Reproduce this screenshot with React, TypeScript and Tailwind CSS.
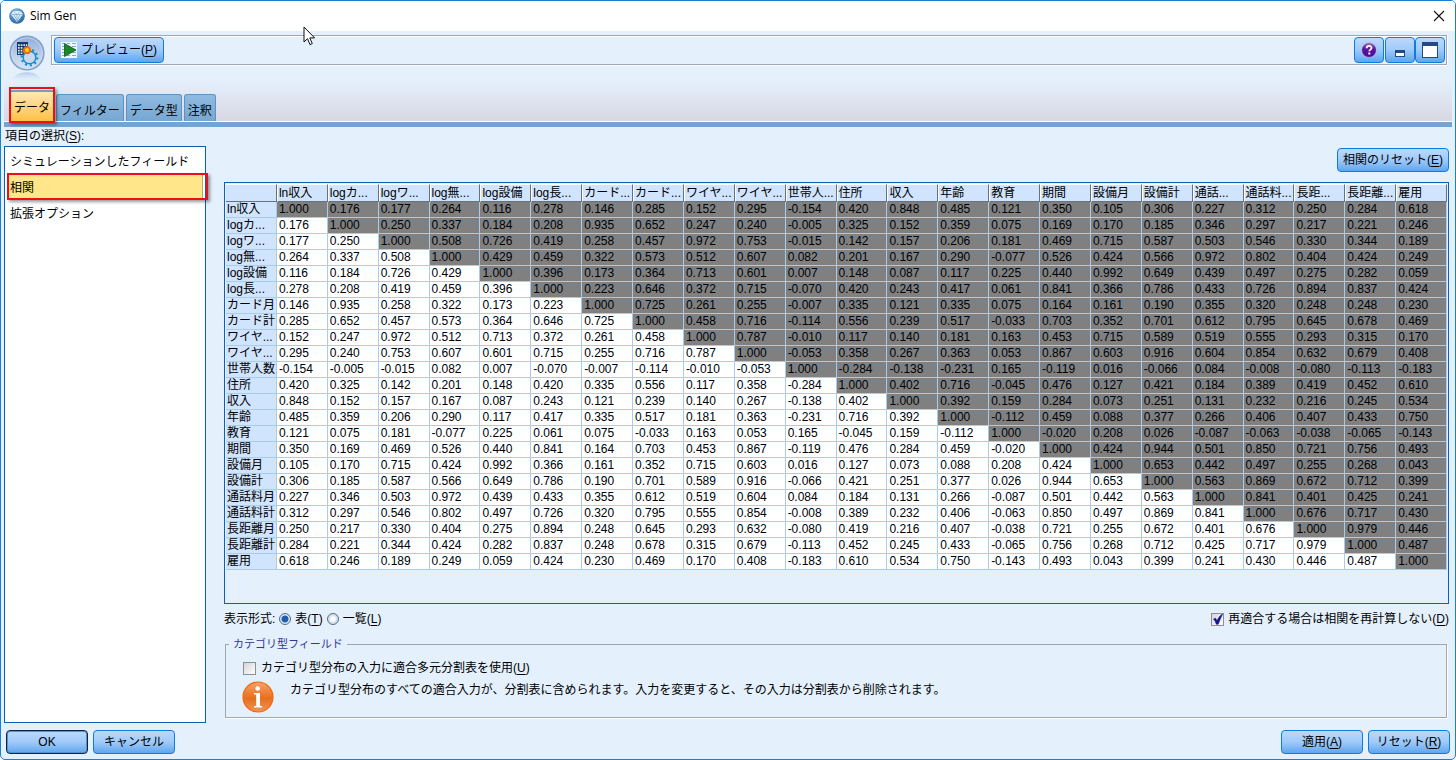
import { useState } from "react";
import type { ReactNode } from "react";

const columnLabels = [
  "ln収入", "logカ...", "logワ...", "log無...", "log設備", "log長...", "カード...", "カード...",
  "ワイヤ...", "ワイヤ...", "世帯人...", "住所", "収入", "年齢", "教育", "期間", "設備月", "設備計",
  "通話...", "通話料...", "長距...", "長距離...", "雇用",
];

const rowLabels = [
  "ln収入", "logカ...", "logワ...", "log無...", "log設備", "log長...", "カード月", "カード計",
  "ワイヤ...", "ワイヤ...", "世帯人数", "住所", "収入", "年齢", "教育", "期間", "設備月", "設備計",
  "通話料月", "通話料計", "長距離月", "長距離計", "雇用",
];

// Lower triangle of the correlation matrix; the upper half mirrors it.
const lower: string[][] = [
  "",
  "0.176",
  "0.177 0.250",
  "0.264 0.337 0.508",
  "0.116 0.184 0.726 0.429",
  "0.278 0.208 0.419 0.459 0.396",
  "0.146 0.935 0.258 0.322 0.173 0.223",
  "0.285 0.652 0.457 0.573 0.364 0.646 0.725",
  "0.152 0.247 0.972 0.512 0.713 0.372 0.261 0.458",
  "0.295 0.240 0.753 0.607 0.601 0.715 0.255 0.716 0.787",
  "-0.154 -0.005 -0.015 0.082 0.007 -0.070 -0.007 -0.114 -0.010 -0.053",
  "0.420 0.325 0.142 0.201 0.148 0.420 0.335 0.556 0.117 0.358 -0.284",
  "0.848 0.152 0.157 0.167 0.087 0.243 0.121 0.239 0.140 0.267 -0.138 0.402",
  "0.485 0.359 0.206 0.290 0.117 0.417 0.335 0.517 0.181 0.363 -0.231 0.716 0.392",
  "0.121 0.075 0.181 -0.077 0.225 0.061 0.075 -0.033 0.163 0.053 0.165 -0.045 0.159 -0.112",
  "0.350 0.169 0.469 0.526 0.440 0.841 0.164 0.703 0.453 0.867 -0.119 0.476 0.284 0.459 -0.020",
  "0.105 0.170 0.715 0.424 0.992 0.366 0.161 0.352 0.715 0.603 0.016 0.127 0.073 0.088 0.208 0.424",
  "0.306 0.185 0.587 0.566 0.649 0.786 0.190 0.701 0.589 0.916 -0.066 0.421 0.251 0.377 0.026 0.944 0.653",
  "0.227 0.346 0.503 0.972 0.439 0.433 0.355 0.612 0.519 0.604 0.084 0.184 0.131 0.266 -0.087 0.501 0.442 0.563",
  "0.312 0.297 0.546 0.802 0.497 0.726 0.320 0.795 0.555 0.854 -0.008 0.389 0.232 0.406 -0.063 0.850 0.497 0.869 0.841",
  "0.250 0.217 0.330 0.404 0.275 0.894 0.248 0.645 0.293 0.632 -0.080 0.419 0.216 0.407 -0.038 0.721 0.255 0.672 0.401 0.676",
  "0.284 0.221 0.344 0.424 0.282 0.837 0.248 0.678 0.315 0.679 -0.113 0.452 0.245 0.433 -0.065 0.756 0.268 0.712 0.425 0.717 0.979",
  "0.618 0.246 0.189 0.249 0.059 0.424 0.230 0.469 0.170 0.408 -0.183 0.610 0.534 0.750 -0.143 0.493 0.043 0.399 0.241 0.430 0.446 0.487",
].map((line) => line.split(" "));

function valueAt(row: number, col: number) {
  if (row === col) return "1.000";
  return row > col ? lower[row][col] : lower[col][row];
}

function Key({ children }: { children: string }) {
  return (
    <span>
      (<span className="underline underline-offset-2">{children}</span>)
    </span>
  );
}

const buttonBase =
  "flex items-center justify-center whitespace-nowrap rounded-[4px] border bg-linear-to-b from-[#bcd9fc] via-[#9fcafa] to-[#5ea6ee]";

function GlossyButton({ className, label, children }: { className: string; label?: string; children: ReactNode }) {
  return (
    <button type="button" aria-label={label} className={`${buttonBase} ${className}`}>
      {children}
    </button>
  );
}

function AppIcon() {
  return (
    <svg className="size-4" viewBox="0 0 16 16" aria-hidden="true">
      <defs>
        <radialGradient id="app" cx="0.4" cy="0.3" r="0.8">
          <stop offset="0" stopColor="#9cc6e8" />
          <stop offset="0.6" stopColor="#3f81ba" />
          <stop offset="1" stopColor="#22639f" />
        </radialGradient>
      </defs>
      <circle cx="8" cy="8" r="7.8" fill="url(#app)" />
      <path d="M4.500 3h7L14 6.300l-6 7.700L2 6.300z" fill="#e3f1fc" />
      <path d="M4.500 3 8 6.500l3.500-3.500M2.500 6.500h11M8 14V6.500M8 13 5 6.500M8 13l3-6.500" fill="none" stroke="#6ba6d3" strokeWidth=".7" />
    </svg>
  );
}

function NodeIcon() {
  return (
    <svg className="h-[47px] w-[36px]" viewBox="0 0 36 47" aria-hidden="true">
      <defs>
        <linearGradient id="disc" x1="0" y1="0" x2="0" y2="1">
          <stop offset="0" stopColor="#8fadd6" />
          <stop offset="0.45" stopColor="#b4c8e5" />
          <stop offset="1" stopColor="#dbe7f7" />
        </linearGradient>
        <linearGradient id="mirror" x1="0" y1="0" x2="0" y2="1">
          <stop offset="0" stopColor="#b3c9e6" />
          <stop offset="1" stopColor="#e4f0fc" stopOpacity="0" />
        </linearGradient>
      </defs>
      <path d="M2 47c4-13 28-13 32 0z" fill="url(#mirror)" />
      <circle cx="18" cy="18" r="16.8" fill="url(#disc)" stroke="#86a1cb" strokeWidth="1.6" />
      <circle cx="18" cy="18" r="15.3" fill="none" stroke="#c9d9ee" strokeWidth=".8" />
      <rect x="8" y="7" width="11" height="13" fill="#123a68" />
      <path d="M9 9.200h1.700v1.700H9zM11.700 9.200h1.700v1.700h-1.700zM14.400 9.200h1.700v1.700h-1.700zM17 9.200h1.300v1.700H17zM9 12h1.700v1.700H9zM11.700 12h1.700v1.700h-1.700zM9 14.800h1.700v1.700H9zM11.700 14.800h1.700v1.700h-1.700zM9 17.500h1.700v1.600H9zM11.700 17.500h1.700v1.600h-1.700z" fill="#dbe8f7" />
      <circle cx="20.500" cy="22.500" r="7.800" fill="none" stroke="#188bc9" strokeWidth="2.200" strokeDasharray="2 2.900" />
      <circle cx="20.500" cy="22.500" r="6.300" fill="#c6d9f0" stroke="#188bc9" strokeWidth="1.400" />
      <circle cx="18" cy="15.300" r="4" fill="#f26b0c" />
      <circle cx="18" cy="15" r="2.100" fill="#ffd21f" />
    </svg>
  );
}

function PreviewIcon() {
  return (
    <svg className="size-4" viewBox="0 0 16 16" aria-hidden="true">
      <rect width="16" height="16" fill="#f1f6fe" />
      <path d="M1 1.500h3M6 1.500h3M11 1.500h4M1 4.500h3M6 4.500h3M11 4.500h4M1 7.500h3M11 7.500h4M1 10.500h3M6 10.500h3M11 10.500h4M1 13.500h3M6 13.500h3M11 13.500h4" stroke="#88a5cf" strokeWidth="1" />
      <path d="M3.500 1.500v13L15 8z" fill="#158a22" stroke="#075a12" strokeWidth=".8" />
    </svg>
  );
}

function HelpIcon() {
  return (
    <svg className="size-4 shrink-0" viewBox="0 0 16 16" aria-hidden="true">
      <defs>
        <linearGradient id="help" x1="0" y1="0" x2="0" y2="1">
          <stop offset="0" stopColor="#9a6fc0" />
          <stop offset="0.45" stopColor="#5a1496" />
          <stop offset="1" stopColor="#4a0a9c" />
        </linearGradient>
      </defs>
      <circle cx="8" cy="8" r="7.400" fill="url(#help)" stroke="#d9cdea" strokeWidth=".6" />
      <path d="M5.700 6.200c0-3.100 4.800-3 4.800-.3 0 1.700-2.200 1.700-2.200 3.400" fill="none" stroke="#fff" strokeWidth="1.800" />
      <rect x="7.300" y="10.500" width="2" height="2" fill="#fff" />
    </svg>
  );
}

function InfoIcon() {
  return (
    <svg className="size-8 shrink-0" viewBox="0 0 32 32" aria-hidden="true">
      <defs>
        <linearGradient id="info" x1="0" y1="0" x2="0" y2="1">
          <stop offset="0" stopColor="#f7a468" />
          <stop offset="0.42" stopColor="#ee7a2c" />
          <stop offset="0.55" stopColor="#e5701f" />
          <stop offset="1" stopColor="#f0965a" />
        </linearGradient>
      </defs>
      <circle cx="16" cy="16" r="15" fill="url(#info)" stroke="#f5640c" strokeWidth="1.200" />
      <circle cx="15.700" cy="7.500" r="2.300" fill="#fff" />
      <path d="M12 12h6v13h2.200v1.500H12V25h2.200V13.500H12z" fill="#fff" />
    </svg>
  );
}

const tabs = ["フィルター", "データ型", "注釈"];
const items = ["シミュレーションしたフィールド", "相関", "拡張オプション"];

export default function App() {
  const [view, setView] = useState("table");
  const [keep, setKeep] = useState(true);
  const [multiway, setMultiway] = useState(false);
  const radio =
    "size-3 appearance-none rounded-full border border-[#5d6b7b] bg-[radial-gradient(circle,#fff_0_2px,#c3dcf5_4px)] shadow-[inset_0_0_0_1px_#dbe4ee] checked:bg-[radial-gradient(circle,#1c5fae_0_3px,#d7e9fb_4px)]";

  return (
    <div className="relative flex min-h-screen flex-col overflow-hidden rounded-[5px] border border-[#1a7fd3] bg-[#e4f0fc] font-['Liberation_Sans','Noto_Sans_CJK_JP',sans-serif] text-[12px] leading-4 text-black">
      <header className="flex h-[30px] shrink-0 items-center justify-between bg-white px-2 font-['Open_Sans','Noto_Sans',sans-serif]">
        <h1 className="flex items-center gap-[5px]">
          <AppIcon />
          Sim Gen
        </h1>
        <button type="button" aria-label="閉じる" className="flex size-4 items-center justify-center">
          <svg className="size-3" viewBox="0 0 12 12" aria-hidden="true">
            <path d="M1 1l10 10M11 1L1 11" stroke="#111" strokeWidth="1.100" />
          </svg>
        </button>
      </header>

      <div className="mx-[3px] flex h-[90px] shrink-0 flex-col justify-between bg-linear-to-b from-[#e4f0fc] from-55% to-[#d8d7e4]">
        <div className="flex items-start gap-[6px] pt-1 pr-[5px] pl-[5px]">
          <NodeIcon />
          <div className="flex h-[30px] flex-1 items-center justify-between border border-[#9da6b2] pr-px pl-[2px] shadow-[1px_1px_0_#fff,inset_1px_1px_0_#fff]">
            <GlossyButton className="h-[26px] w-[110px] gap-1 border-[#0f7bdb]">
              <PreviewIcon />
              <span>プレビュー<Key>P</Key></span>
            </GlossyButton>
            <div className="flex">
              <GlossyButton label="ヘルプ" className="mr-px h-[26px] w-[30px] border-[#0f7bdb]">
                <HelpIcon />
              </GlossyButton>
              <GlossyButton label="最小化" className="h-[26px] w-[30px] border-[#0f7bdb]">
                <span className="mt-[6px] h-[7px] w-[10px] border border-t-3 border-[#254a80] bg-white" />
              </GlossyButton>
              <GlossyButton label="最大化" className="h-[26px] w-[30px] border-[#0f7bdb]">
                <span className="h-4 w-4 border border-t-4 border-[#254a80] bg-white" />
              </GlossyButton>
            </div>
          </div>
        </div>
        <div role="tablist" className="flex items-end gap-[2px] pl-[7px]">
          <div className="relative mr-px">
            <button type="button" role="tab" aria-selected="true" className="block h-[31px] w-[42px] border-t-2 border-[#7a9cb8] bg-linear-to-b from-[#ffe7b2] to-[#fdc040] pt-[3px]">
              データ
            </button>
            <span className="pointer-events-none absolute -inset-x-[2px] -top-[3px] -bottom-[2px] z-10 border-2 border-[#ee0e18] shadow-[2px_2px_3px_rgba(0,0,0,0.4)]" />
          </div>
          {tabs.map((tab) => (
            <button key={tab} type="button" role="tab" aria-selected="false" className="h-[27px] rounded-t-[3px] border border-b-0 border-[#5c93c3] bg-linear-to-b from-[#8fbbe0] to-[#76a6d2] px-[3px] pt-[5px]">
              {tab}
            </button>
          ))}
        </div>
      </div>
      <div className="mx-[3px] h-[6px] shrink-0 border-t border-white bg-[#75a4d3]" />

      <main className="flex flex-1 gap-[18px] pr-[6px] pl-[3px]">
        <nav className="flex w-[202px] shrink-0 flex-col">
          <p id="items-label" className="h-[19px] pt-px pl-px">項目の選択<Key>S</Key>:</p>
          <ul aria-labelledby="items-label" className="flex-1 border border-[#0a62b8] bg-white px-[2px] pt-px">
            {items.map((item) => (
              <li key={item} className="relative">
                <button
                  type="button"
                  className={
                    item === "相関"
                      ? "block h-[26px] w-full border-r border-[#b9a760] bg-[#ffe68a] pt-px pl-[3px] text-left"
                      : "block h-[26px] w-full pt-px pl-[3px] text-left"
                  }
                >
                  {item}
                </button>
                {item === "相関" && (
                  <span className="pointer-events-none absolute -top-px -right-[5px] bottom-0 left-0 border-2 border-[#ee0e18] shadow-[2px_2px_3px_rgba(0,0,0,0.4)]" />
                )}
              </li>
            ))}
          </ul>
        </nav>

        <section className="flex min-w-0 flex-1 flex-col">
          <div className="flex justify-end pt-[21px] pb-[10px]">
            <GlossyButton className="h-6 w-[112px] border-[#0f7bdb]">
              <span>相関のリセット<Key>E</Key></span>
            </GlossyButton>
          </div>

          <div className="flex-1 border border-[#0a62b8] p-px">
            <table className="w-full table-fixed border-separate border-spacing-0 text-left">
              <thead>
                <tr>
                  <td className="border-t border-r border-b border-t-white border-r-[#66717e] border-b-[#66717e] bg-[#d0e4fd]" />
                  {columnLabels.map((label, i) => (
                    <th key={i} scope="col" className="h-[18px] overflow-hidden border border-t-white border-r-[#66717e] border-b-[#66717e] border-l-white bg-[#d0e4fd] p-0 pl-px font-normal whitespace-nowrap">
                      {label}
                    </th>
                  ))}
                </tr>
              </thead>
              <tbody>
                {rowLabels.map((label, row) => (
                  <tr key={row}>
                    <th scope="row" className="h-4 overflow-hidden border-r border-b border-[#abcbea] bg-[#d0e4fd] p-0 pl-px leading-[15px] font-normal whitespace-nowrap">
                      {label}
                    </th>
                    {columnLabels.map((_, col) => (
                      <td
                        key={col}
                        className={
                          col >= row
                            ? "border-r border-b border-[#abcbea] bg-[#808080] p-0 pl-[2px] leading-[15px]"
                            : "border-r border-b border-[#abcbea] bg-white p-0 pl-[2px] leading-[15px]"
                        }
                      >
                        {valueAt(row, col)}
                      </td>
                    ))}
                  </tr>
                ))}
              </tbody>
            </table>
          </div>

          <div className="flex h-[30px] items-center justify-between">
            <div role="radiogroup" aria-labelledby="view-label" className="flex items-center gap-1">
              <span id="view-label">表示形式:</span>
              <label className="flex items-center gap-1">
                <input type="radio" name="view" className={radio} checked={view === "table"} onChange={() => setView("table")} />
                <span>表<Key>T</Key></span>
              </label>
              <label className="flex items-center gap-1">
                <input type="radio" name="view" className={radio} checked={view === "list"} onChange={() => setView("list")} />
                <span>一覧<Key>L</Key></span>
              </label>
            </div>
            <label className="flex items-center gap-1">
              <span className="relative flex">
                <input
                  type="checkbox"
                  checked={keep}
                  onChange={() => setKeep(!keep)}
                  className="size-[13px] appearance-none border border-[#8c8f94] bg-linear-to-br from-[#d4d6da] to-white"
                />
                {keep && (
                  <svg className="pointer-events-none absolute inset-0 size-[13px]" viewBox="0 0 13 13" aria-hidden="true">
                    <path d="M2.500 6l2-.8 1.500 2.500C7 5.500 9 2.500 11.500 1 9.800 4.500 8.500 8 7.200 11.200H5.300C4.800 9 3.800 7.300 2.500 6z" fill="#14148c" stroke="#14148c" strokeWidth=".6" />
                  </svg>
                )}
              </span>
              <span>再適合する場合は相関を再計算しない<Key>D</Key></span>
            </label>
          </div>

          <fieldset className="mt-1 mr-[2px] mb-[5px] ml-px h-[80px] border border-[#9da6b2] pl-4 shadow-[1px_1px_0_#fff]">
            <legend className="-ml-[13px] px-1 text-[11px] leading-[12px] text-[#34349c]">カテゴリ型フィールド</legend>
            <label className="mt-[10px] flex h-4 items-center gap-1">
              <input
                type="checkbox"
                checked={multiway}
                onChange={() => setMultiway(!multiway)}
                className="mx-px size-[13px] appearance-none border border-[#8c8f94] bg-linear-to-br from-[#d4d6da] to-white"
              />
              <span>カテゴリ型分布の入力に適合多元分割表を使用<Key>U</Key></span>
            </label>
            <div className="flex items-start gap-4 pt-[5px]">
              <InfoIcon />
              <p className="pt-px">カテゴリ型分布のすべての適合入力が、分割表に含められます。入力を変更すると、その入力は分割表から削除されます。</p>
            </div>
          </fieldset>
        </section>
      </main>

      <footer className="flex h-9 shrink-0 justify-between pt-[7px] pr-[5px] pl-[5px]">
        <div className="flex gap-[5px]">
          <GlossyButton className="h-6 w-[82px] border-[#10233c] shadow-[inset_0_0_0_1px_#5b92cc]">OK</GlossyButton>
          <GlossyButton className="h-6 w-[82px] border-[#0f7bdb]">キャンセル</GlossyButton>
        </div>
        <div className="flex gap-[5px]">
          <GlossyButton className="h-6 w-[82px] border-[#0f7bdb]">
            <span>適用<Key>A</Key></span>
          </GlossyButton>
          <GlossyButton className="h-6 w-[82px] border-[#0f7bdb]">
            <span>リセット<Key>R</Key></span>
          </GlossyButton>
        </div>
      </footer>

      <svg className="pointer-events-none absolute top-[25px] left-[302px] h-[20px] w-[13px]" viewBox="0 0 13 20" aria-hidden="true">
        <path d="M1 1v15l3.500-3.300L7 18.600l2.300-1-2.500-5.700H11.600z" fill="#fff" stroke="#111" strokeWidth="1" />
      </svg>
    </div>
  );
}
